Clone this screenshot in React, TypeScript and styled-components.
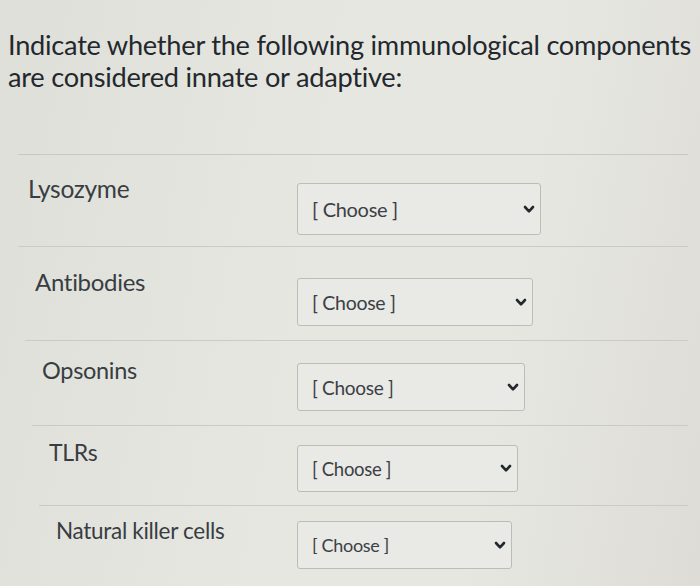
import React from "react";
import styled, { createGlobalStyle } from "styled-components";

const Global = createGlobalStyle`
  html, body { margin: 0; padding: 0; background: #e3e3de; }
  body { font-family: Lato, "Open Sans", sans-serif; color: #2b3238; }
`;

const Page = styled.div`
  width: 700px;
  height: 586px;
  overflow: hidden;
  background: linear-gradient(100deg, #dfdfd9 0%, #e7e7e2 45%, #e7e7e2 70%, #dddcd6 100%);
`;

const Title = styled.h1`
  margin: 0;
  padding: 29px 0 0 8px;
  font-size: 27.2px;
  line-height: 32px;
  font-weight: 400;
  letter-spacing: -0.25px;
  color: #23282d;
  white-space: nowrap;
`;

const Panel = styled.div`
  margin: 61px 12px 0 18px;
  border-top: 1.5px solid #c9c9c3;
`;

const Row = styled.div<{ $shift: number; $top: number; $h: number; $last?: boolean }>`
  display: flex;
  align-items: flex-start;
  height: ${(p) => p.$h}px;
  box-sizing: border-box;
  padding-top: ${(p) => p.$top}px;
  padding-left: 10px;
  margin-left: ${(p) => p.$shift}px;
  border-bottom: ${(p) => (p.$last ? "none" : "1.5px solid #cbcbc5")};
`;

const Label = styled.div<{ $w: number; $fs: number }>`
  width: ${(p) => p.$w}px;
  flex: none;
  font-size: ${(p) => p.$fs}px;
  line-height: 28px;
  letter-spacing: -0.3px;
  color: #383d42;
`;

const Select = styled.div<{ $w: number; $h: number; $off: number; $fs: number }>`
  margin-top: ${(p) => p.$off}px;
  width: ${(p) => p.$w}px;
  height: ${(p) => p.$h}px;
  box-sizing: border-box;
  border: 1.5px solid #bdbdb8;
  border-radius: 3px;
  background: #e9e9e5;
  display: flex;
  align-items: center;
  justify-content: space-between;
  padding: 0 5px 0 14px;
  font-size: ${(p) => p.$fs}px;
  letter-spacing: -0.3px;
  color: #3b4045;
`;

const Chevron = () => (
  <svg width="12" height="9" viewBox="0 0 12 9">
    <path d="M2 2 L6 6.3 L10 2" fill="none" stroke="#23282c" strokeWidth="2.6" strokeLinecap="round" strokeLinejoin="round" />
  </svg>
);

const rows = [
  { label: "Lysozyme", top: 20, h: 92, sw: 244, sh: 52, off: 8, fs: 24.5, sfs: 20 },
  { label: "Antibodies", top: 21, h: 94, sw: 236, sh: 48, off: 10, fs: 24, sfs: 19.5 },
  { label: "Opsonins", top: 15, h: 85, sw: 228, sh: 48, off: 7, fs: 23.5, sfs: 19 },
  { label: "TLRs", top: 12, h: 80, sw: 221, sh: 47, off: 7, fs: 23, sfs: 18.5 },
  { label: "Natural killer cells", top: 11, h: 90, sw: 215, sh: 48, off: 4, fs: 22.5, sfs: 18 },
];

export default function App() {
  return (
    <Page>
      <Global />
      <Title>
        Indicate whether the following immunological components
        <br />
        are considered innate or adaptive:
      </Title>
      <Panel>
        {rows.map((r, i) => {
          const shift = 7 * i;
          return (
            <Row key={r.label} $shift={shift} $top={r.top} $h={r.h} $last={i === rows.length - 1}>
              <Label $w={269 - shift} $fs={r.fs}>{r.label}</Label>
              <Select $w={r.sw} $h={r.sh} $off={r.off} $fs={r.sfs}>
                <span>[ Choose ]</span>
                <Chevron />
              </Select>
            </Row>
          );
        })}
      </Panel>
    </Page>
  );
}
